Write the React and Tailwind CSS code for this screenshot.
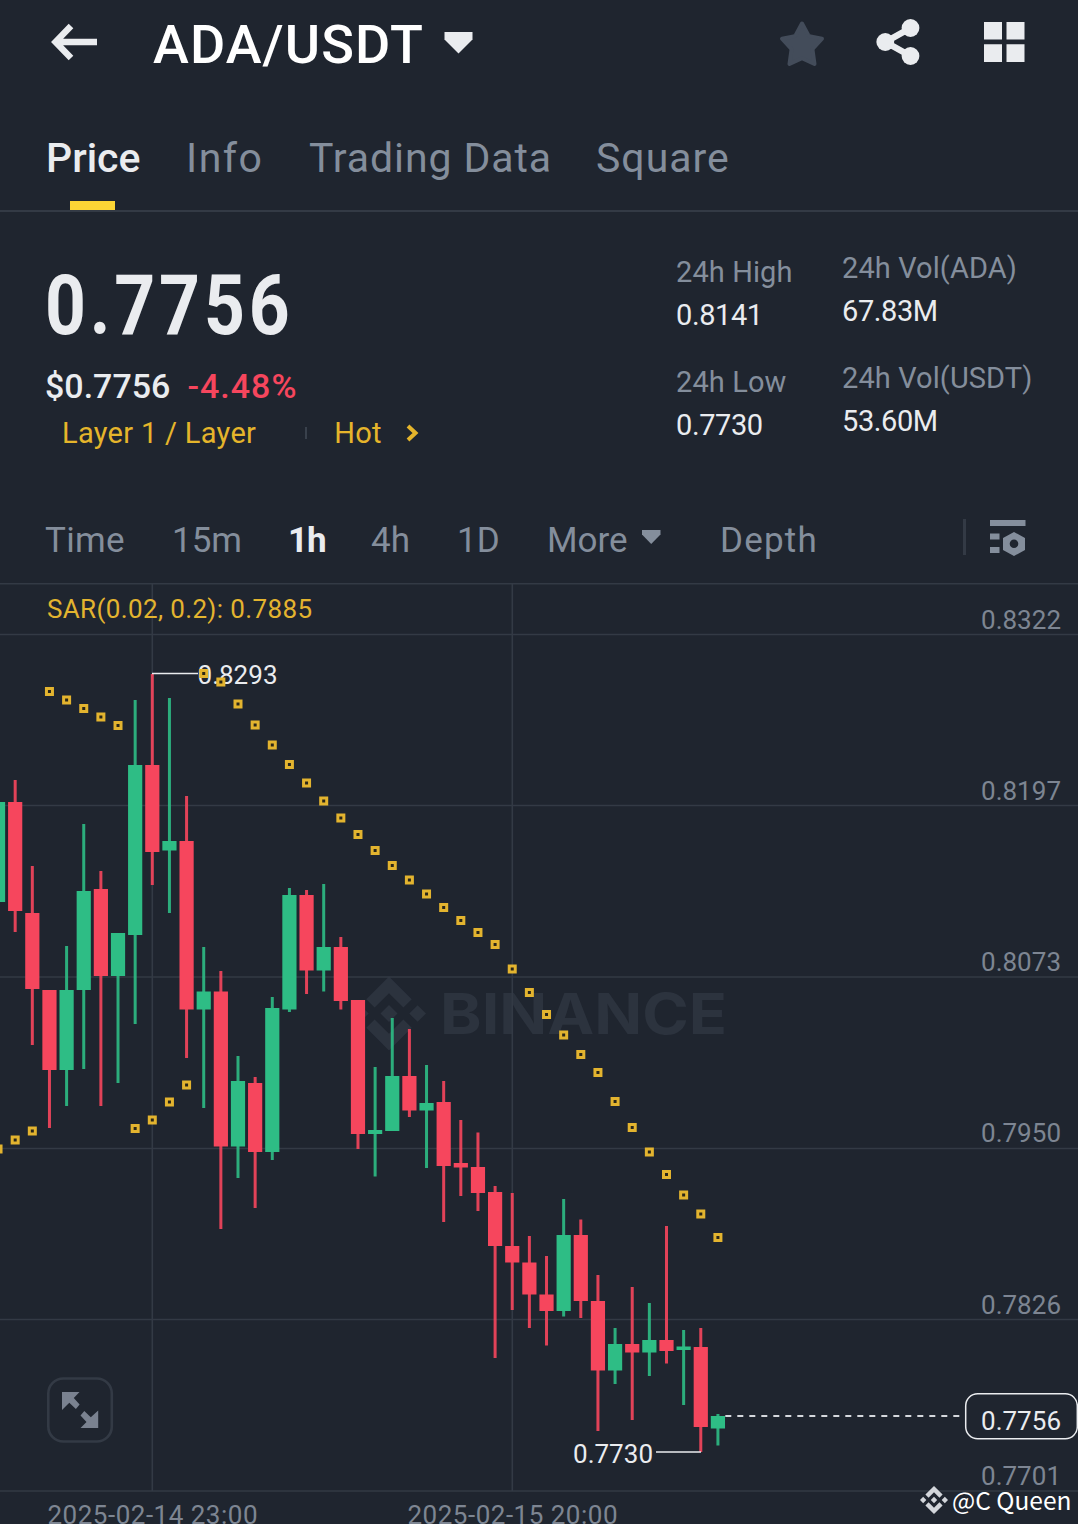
import clsx from "clsx";

const UP = "#2ebd85";
const DOWN = "#f6465d";
const SAR = "#e3b42f";
const GRID = "#333a45";

// [direction, high, body top, body bottom, low], one hour per entry
const candles = [
  ["up", 802, 802, 902, 902],
  ["down", 780, 802, 911, 932],
  ["down", 866, 913, 989, 1045],
  ["down", 990, 990, 1070, 1128],
  ["up", 946, 990, 1070, 1106],
  ["up", 824, 891, 990, 1069],
  ["down", 871, 889, 976, 1106],
  ["up", 933, 933, 976, 1083],
  ["up", 700, 765, 935, 1024],
  ["down", 674, 765, 852, 885],
  ["up", 698, 841, 850.5, 913],
  ["down", 796, 841, 1009.5, 1058],
  ["up", 947, 991.5, 1009.5, 1108],
  ["down", 971, 991.5, 1146.5, 1229],
  ["up", 1056, 1081, 1146.5, 1178],
  ["down", 1077, 1083, 1152, 1208],
  ["up", 997, 1008, 1152, 1160],
  ["up", 888, 895, 1009.5, 1012],
  ["down", 890, 895, 970.5, 994],
  ["up", 884, 947, 970.5, 991.5],
  ["down", 937, 947, 1001, 1009.5],
  ["down", 1000, 1000, 1134, 1149],
  ["up", 1067, 1130, 1134, 1176.5],
  ["up", 1018, 1076, 1131, 1131],
  ["down", 1029, 1076, 1110.5, 1117],
  ["up", 1065, 1103, 1110.5, 1168],
  ["down", 1081, 1102, 1166, 1222],
  ["down", 1120, 1163, 1167.5, 1196],
  ["down", 1132.5, 1167, 1193, 1211],
  ["down", 1186, 1192, 1246, 1358],
  ["down", 1193, 1246, 1262.5, 1310],
  ["down", 1236, 1262.5, 1294.5, 1328],
  ["down", 1256, 1294.5, 1311, 1345.5],
  ["up", 1199, 1235, 1311, 1316.5],
  ["down", 1219.5, 1235, 1301, 1318],
  ["down", 1275, 1301, 1370.5, 1431],
  ["up", 1328, 1344, 1370.5, 1384],
  ["down", 1287, 1344, 1352.5, 1420],
  ["up", 1303, 1340, 1352.5, 1376],
  ["down", 1226, 1340, 1351, 1363.5],
  ["up", 1330, 1346.5, 1350, 1405],
  ["down", 1328, 1347, 1427, 1452],
  ["up", 1414, 1416, 1428.5, 1445.5],
];

// parabolic SAR, one dot per candle
const sarDots = [
  1149, 1140, 1131, 691.5, 700, 708.5, 717, 725.5, 1128.5, 1120, 1102, 1085,
  673.5, 682, 704, 725, 745, 764.5, 783, 801, 818, 834.5, 850.5, 865.5, 880,
  894, 907.5, 920.5, 932.5, 944.5, 969, 992.5, 1014.5, 1035, 1054.5, 1072.5,
  1101.5, 1127.5, 1152, 1174.5, 1195, 1214, 1237.5,
];

const axis = [
  ["0.8322", 629],
  ["0.8197", 800],
  ["0.8073", 971],
  ["0.7950", 1142],
  ["0.7826", 1314],
  ["0.7701", 1485],
];

const tabs = [
  { label: "Price", cls: "w-[140px] font-medium text-[#eaecef]" },
  { label: "Info", cls: "w-[123px] text-[#848e9c] tracking-[1.5px]" },
  { label: "Trading Data", cls: "w-[287px] text-[#848e9c] tracking-[0.9px]" },
  { label: "Square", cls: "text-[#848e9c] tracking-[1px]" },
];

const intervals = [
  { label: "Time", cls: "w-[127px] tracking-[0.3px]" },
  { label: "15m", cls: "w-[116px]" },
  { label: "1h", cls: "w-[83px] font-bold text-[#eaecef] tracking-[-1px]" },
  { label: "4h", cls: "w-[86px]" },
  { label: "1D", cls: "w-[90px]" },
];

const xOf = (i) => -1.96 + 17.14 * i;

function BinanceMark(props) {
  return (
    <svg viewBox="0 0 126.6 126.6" fill="currentColor" {...props}>
      <path d="M38.7 53.2 63.3 28.6l24.6 24.6 14.3-14.3L63.3 0 24.4 38.9Z" />
      <path d="M0 63.3 14.3 49l14.3 14.3-14.3 14.3Z" />
      <path d="M38.7 73.4 63.3 98l24.6-24.6 14.3 14.3-38.9 38.9-38.9-38.9Z" />
      <path d="M98 63.3 112.3 49l14.3 14.3-14.3 14.3Z" />
      <path d="M77.8 63.3 63.3 48.8 48.8 63.3l14.5 14.5Z" />
    </svg>
  );
}

function Header() {
  return (
    <header className="flex h-[88px] items-center pl-[51px] pr-[53px] text-[#eaecef]">
      <svg width="46" height="38" viewBox="0 0 46 38" fill="none" stroke="currentColor" strokeWidth="6.4" className="mb-1">
        <path d="M20 3 4.500 19 20 35M5 19H46" />
      </svg>
      <h1 className="ml-[56px] pt-[2px] text-[54px] font-medium leading-[86px] tracking-[1.1px] text-white">ADA/USDT</h1>
      <svg width="29" height="22" viewBox="0 0 29 22" fill="currentColor" className="ml-[20px] mb-[2px]">
        <path d="M.5 0h28v7.500l-14 14-14-14Z" />
      </svg>
      <div className="ml-auto flex items-center">
        <svg width="46" height="48" viewBox="0 0 46 48" className="text-[#434c5a]" fill="currentColor" stroke="currentColor" strokeWidth="4" strokeLinejoin="round">
          <path d="m23 3.500 6.200 11.500c.6 1 1.300 1.300 2.300 1.500L43 18.600l-8.500 9.200c-.8.900-1 1.600-.9 2.600L35.500 44 23 38.200 10.500 44l1.900-13.600c.1-1-.1-1.700-.9-2.600L3 18.600l11.500-2.100c1-.2 1.700-.5 2.300-1.500Z" />
        </svg>
        <svg width="44" height="46" viewBox="0 0 44 46" fill="currentColor" className="ml-[51px] mb-1">
          <path d="M34.500 9 9.500 23l25 14" fill="none" stroke="currentColor" strokeWidth="6.500" />
          <circle cx="34.500" cy="9" r="8.900" />
          <circle cx="9.300" cy="23" r="8.900" />
          <circle cx="34.500" cy="37" r="8.900" />
        </svg>
        <svg width="41" height="40" viewBox="0 0 41 40" fill="currentColor" className="ml-[64px] mb-1">
          <path d="M0 0h18v17.500H0zM22.500 0h18v17.500h-18zM0 22.300h18V40H0zM22.500 22.300h18V40h-18z" />
        </svg>
      </div>
    </header>
  );
}

function Tabs() {
  return (
    <nav className="flex h-[124px] border-b-2 border-[#333a45] pl-[46px] pt-[40px] text-[41px] leading-[60px]">
      {tabs.map((t, i) => (
        <div key={t.label} className={clsx("flex flex-col", t.cls)}>
          <span>{t.label}</span>
          {i === 0 && <span className="ml-[24px] mt-[13px] h-[9px] w-[45px] bg-[#fcd535]" />}
        </div>
      ))}
    </nav>
  );
}

function Stat({ label, value }) {
  return (
    <div className="mb-[25px] text-[29px] leading-[42.5px]">
      <div className="whitespace-nowrap tracking-[0.1px] text-[#848e9c]">{label}</div>
      <div className="tracking-[-0.4px] text-[#eaecef]">{value}</div>
    </div>
  );
}

function Summary() {
  return (
    <section className="flex h-[294px]">
      <div className="w-[676px] pl-[45px] pt-[49px]">
        <div className="origin-left scale-x-85 text-[84px] font-bold leading-[90px] tracking-[4.5px] text-[#eaecef]">0.7756</div>
        <div className="mt-[15px] flex gap-[17px] text-[34px] font-medium leading-[40px]">
          <span className="text-[#eaecef]">$0.7756</span>
          <span className="tracking-[1px] text-[#f6465d]">-4.48%</span>
        </div>
        <div className="mt-[7px] flex items-center pl-[17px] text-[29px] leading-[40px] tracking-[0.3px] text-[#e5b52b]">
          <span>Layer 1 / Layer</span>
          <span className="ml-[49px] h-3 w-[2px] bg-[#39414c]" />
          <span className="ml-[27px]">Hot</span>
          <svg width="13" height="18" viewBox="0 0 13 18" fill="none" stroke="currentColor" strokeWidth="4" className="ml-[24px]">
            <path d="m2 2 7.500 7L2 16" />
          </svg>
        </div>
      </div>
      <div className="w-[166px] pt-[39px]">
        <Stat label="24h High" value="0.8141" />
        <Stat label="24h Low" value="0.7730" />
      </div>
      <div className="pt-[35px]">
        <Stat label="24h Vol(ADA)" value="67.83M" />
        <Stat label="24h Vol(USDT)" value="53.60M" />
      </div>
    </section>
  );
}

function Intervals() {
  return (
    <div className="flex h-[77px] pl-[45px] text-[35px] leading-[69px] text-[#848e9c]">
      {intervals.map((t) => (
        <span key={t.label} className={t.cls}>{t.label}</span>
      ))}
      <span className="flex w-[173px]">
        More
        <svg width="19" height="14" viewBox="0 0 19 14" fill="currentColor" className="ml-[14px] mt-[24px]">
          <path d="M0 0h18.500v4.500L9.200 14 0 4.500Z" />
        </svg>
      </span>
      <span className="tracking-[1.2px]">Depth</span>
      <span className="ml-auto mt-[13px] h-[36px] w-[3px] bg-[#333a45]" />
      <svg width="36" height="37" viewBox="0 0 36 37" fill="currentColor" className="ml-[24px] mr-[52px] mt-[14px]">
        <path d="M0 0h35.500v6H0zM0 13.500h9.500v6H0zM0 27h9.500v6H0z" />
        <path fillRule="evenodd" d="m24 12 11 6v12l-11 6-11-6V18ZM24 19.500a4.300 4.300 0 1 0 0 8.600 4.300 4.300 0 0 0 0-8.600Z" />
      </svg>
    </div>
  );
}

function Chart() {
  return (
    <svg viewBox="0 583 1078 941" width="1078" height="941" className="block" fontSize="26">
      <g fill="#2c333e">
        <BinanceMark x="352" y="976.500" width="74" height="74" color="#2c333e" />
        <text x="440" y="1034" fontSize="57" fontWeight="700" textLength="287" lengthAdjust="spacingAndGlyphs" className="font-['Inter',sans-serif]">BINANCE</text>
      </g>

      {/* grid */}
      <g stroke={GRID} strokeWidth="1.6">
        {[583.8, 634.5, 805.5, 977, 1148.5, 1319.5, 1491].map((y) => (
          <line key={y} x1="0" x2="1078" y1={y} y2={y} />
        ))}
        <line x1="152.300" x2="152.300" y1="583" y2="1491" />
        <line x1="512.300" x2="512.300" y1="583" y2="1491" />
      </g>

      {candles.map(([dir, high, top, bottom, low], i) => (
        <g key={i} fill={dir === "up" ? UP : DOWN}>
          <rect x={xOf(i) - 1.5} y={high} width="3" height={low - high} opacity="0.9" />
          <rect x={xOf(i) - 7.1} y={top} width="14.200" height={bottom - top} />
        </g>
      ))}

      {/* high / low callouts */}
      <g fill="#eaecef" stroke="none">
        <path d="M152 673.500h46M656 1452h45" stroke="#eaecef" strokeWidth="1.700" />
        <text x="197.500" y="684" textLength="80">0.8293</text>
        <text x="573" y="1463" textLength="80">0.7730</text>
      </g>

      {sarDots.map((y, i) => (
        <rect key={i} x={xOf(i) - 3} y={y - 3} width="6" height="6" fill="#2a2618" stroke={SAR} strokeWidth="3" />
      ))}
      <text x="47" y="618" fill={SAR} textLength="265">SAR(0.02, 0.2): 0.7885</text>

      <g fill="#7d8592">
        {axis.map(([label, y]) => (
          <text key={label} x="981" y={y} textLength="80">{label}</text>
        ))}
        <text x="47.500" y="1524" textLength="210">2025-02-14 23:00</text>
        <text x="407.500" y="1524" textLength="210">2025-02-15 20:00</text>
      </g>

      {/* last price */}
      <path d="M725.300 1416H960" stroke="#d5d8dd" strokeWidth="1.800" strokeDasharray="6 6" />
      <rect x="965.700" y="1393.700" width="111.600" height="45" rx="12" fill="none" stroke="#eaecef" strokeWidth="1.500" />
      <text x="981" y="1430" fill="#eaecef" textLength="80">0.7756</text>

      {/* fullscreen button */}
      <rect x="48.300" y="1378.500" width="63.500" height="63" rx="15" fill="none" stroke="#333a45" strokeWidth="2.600" />
      <g fill="#7a8290">
        <path d="M62 1392h17.500l-5.700 6 5.800 6.500-3.700 4.500-6.600-6.200L62 1410Z" />
        <path d="M98.200 1428H80.500l6-6-6-6.500 3.800-4.600 6.500 6.300 7.400-6.700Z" />
      </g>
    </svg>
  );
}

export default function App() {
  return (
    <div className="relative h-[1524px] w-[1078px] overflow-hidden bg-[#1f252f] font-['Roboto',sans-serif]">
      <Header />
      <Tabs />
      <Summary />
      <Intervals />
      <Chart />
      <div className="absolute bottom-[8px] left-[920px] flex items-center gap-1 font-['Noto_Sans_CJK_SC',sans-serif] text-[24.5px] leading-[32px] text-white">
        <BinanceMark className="h-[28px] w-[28px] text-[#d3d6db]" />
        <span className="whitespace-nowrap">@C Queen</span>
      </div>
    </div>
  );
}
